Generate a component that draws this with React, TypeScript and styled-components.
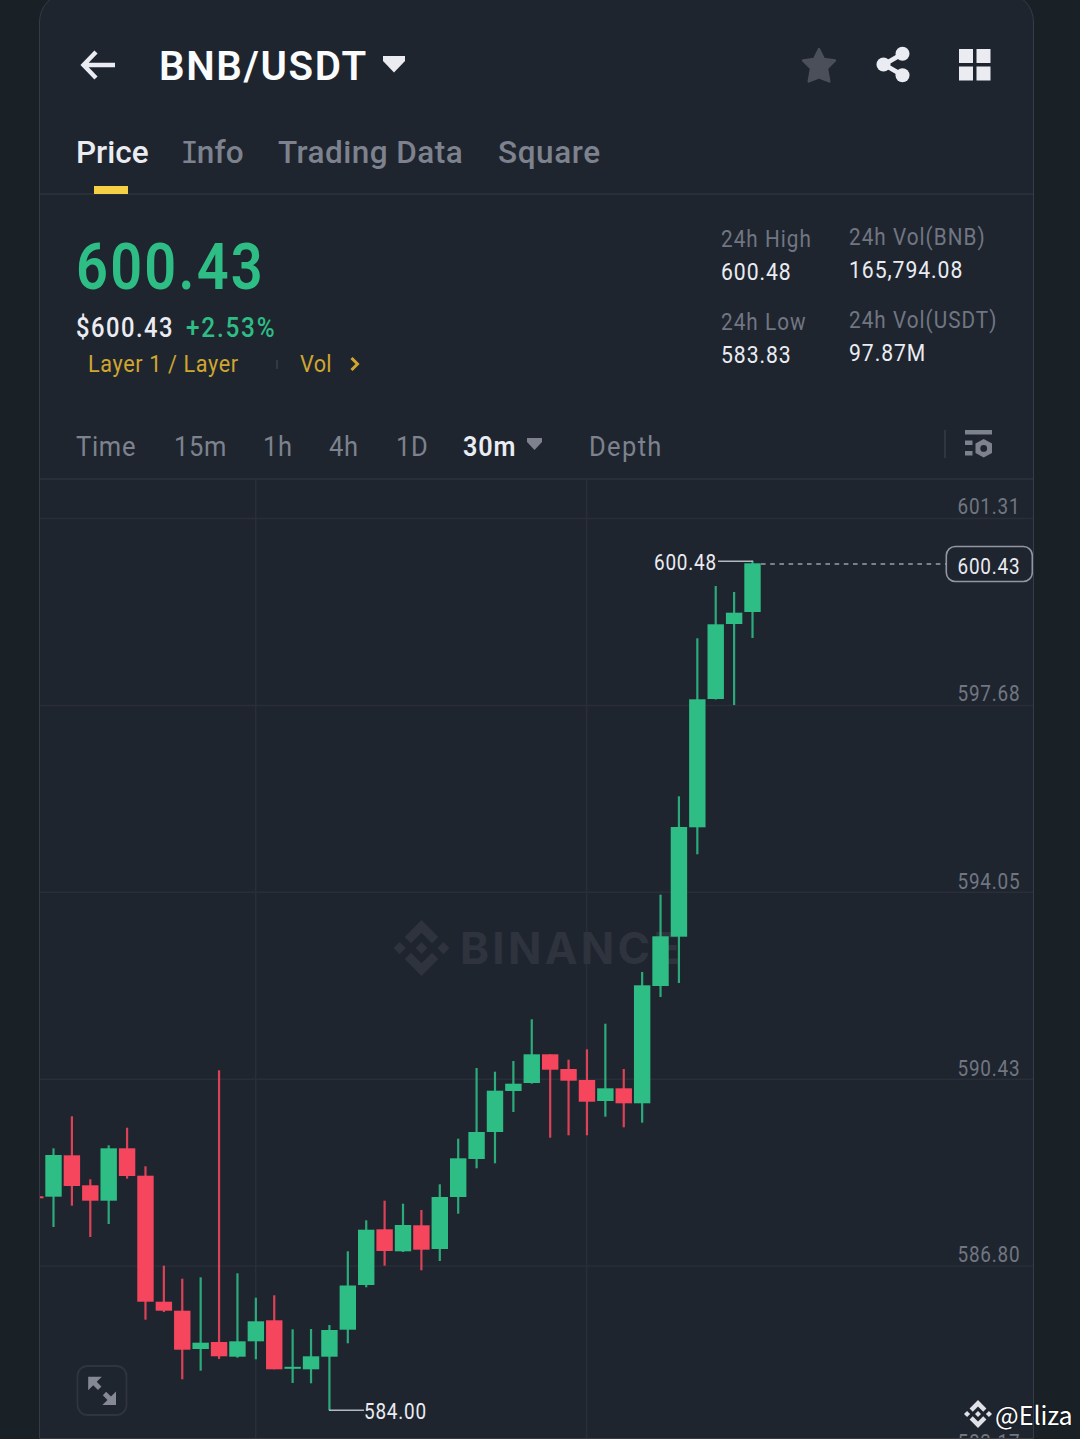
import React from "react";
import styled, { createGlobalStyle } from "styled-components";

const colors = {
  page: "#192026",
  panel: "#1f252f",
  line: "#292e39",
  edge: "#363b46",
  text: "#eaecf2",
  muted: "#7d828e",
  green: "#2ebd85",
  red: "#f6465d",
  gold: "#d0a62f",
};

const sans = `Roboto, "Noto Sans", sans-serif`;

const GlobalStyle = createGlobalStyle`
  * { box-sizing: border-box; }
  body { margin: 0; background: ${colors.page}; font-family: ${sans}; }
`;

const Page = styled.div`
  position: relative;
  width: 1080px;
  height: 1439px;
  overflow: hidden;
  background: ${colors.page};
`;

const Panel = styled.main`
  width: 995px;
  height: 1447px;
  margin: -8px 0 0 39px;
  padding-top: 8px;
  background: ${colors.panel};
  border: 1px solid ${colors.edge};
  border-radius: 30px 30px 0 0;
  display: flex;
  flex-direction: column;
  overflow: hidden;
`;

/* Narrow numerals: horizontally condensed glyphs with open tracking. */
const Narrow = styled.span<{ $scale: number; $track: number; $width?: number }>`
  display: inline-block;
  width: ${(p) => (p.$width ? `${p.$width}px` : "auto")};
  transform: scaleX(${(p) => p.$scale});
  transform-origin: left center;
  letter-spacing: ${(p) => p.$track}px;
  white-space: nowrap;
`;

const Header = styled.header`
  height: 128px;
  flex: none;
  padding: 0 40.5px 0 40px;
  display: flex;
  align-items: center;
`;

const BackIcon = styled.svg`
  width: 36px;
  height: 30px;
  flex: none;
`;

const Pair = styled.h1`
  margin: 0 0 0 43px;
  padding-top: 2px;
  color: #fafbfd;
  font-size: 41.5px;
  font-weight: 600;
  line-height: 50px;
`;

const Caret = styled.svg<{ $w: number; $h: number; $gap: number; $lift: number }>`
  width: ${(p) => p.$w}px;
  height: ${(p) => p.$h}px;
  flex: none;
  margin: 0 0 ${(p) => p.$lift}px ${(p) => p.$gap}px;
`;

const HeaderActions = styled.div`
  margin-left: auto;
  display: flex;
  align-items: center;
`;

const ActionIcon = styled.svg<{ $gap?: number }>`
  width: 36px;
  height: 38px;
  flex: none;
  margin-left: ${(p) => p.$gap ?? 0}px;
`;

const Tabs = styled.nav`
  height: 66px;
  flex: none;
  display: flex;
  padding-left: 36px;
  border-bottom: 2px solid ${colors.line};
`;

const Tab = styled.div<{ $active?: boolean; $slab?: boolean; $width: number; $spacing: number }>`
  width: ${(p) => p.$width}px;
  margin-right: 34px;
  height: 65px;
  color: ${(p) => (p.$active ? colors.text : colors.muted)};
  font-size: 31.5px;
  font-weight: 500;
  line-height: 47px;
  letter-spacing: ${(p) => p.$spacing}px;
  white-space: nowrap;

  ${(p) =>
    p.$slab &&
    `&::first-letter {
      font-family: "DejaVu Sans Mono", monospace;
      font-size: 30px;
      line-height: 20px;
      margin: 0 -2px 0 -2.5px;
    }`}

  &::after {
    content: "";
    display: ${(p) => (p.$active ? "block" : "none")};
    width: 34px;
    height: 8px;
    margin: 10px 0 0 18px;
    background: #f6cf45;
  }
`;

const Summary = styled.section`
  height: 215px;
  flex: none;
  padding: 29px 0 0 36px;
  display: flex;
`;

const PriceBlock = styled.div`
  width: 645px;
  display: flex;
  flex-direction: column;
`;

const LastPrice = styled.div`
  color: ${colors.green};
  font-size: 65px;
  font-weight: 600;
  line-height: 86px;
  height: 84px;
`;

const FiatRow = styled.div`
  display: flex;
  height: 36px;
  margin-top: 2px;
  font-size: 27px;
  font-weight: 500;
  line-height: 36px;
  color: ${colors.text};
`;

const Change = styled.span`
  color: ${colors.green};
`;

const TagRow = styled.div`
  display: flex;
  align-items: center;
  height: 36px;
  padding-left: 12px;
  color: ${colors.gold};
  font-size: 24px;
  line-height: 36px;
`;

const TagDivider = styled.i`
  width: 2px;
  height: 9px;
  margin-right: 22px;
  background: #343944;
`;

const Chevron = styled.svg`
  width: 10px;
  height: 16px;
`;

const Stats = styled.div<{ $width: number; $lift: number }>`
  width: ${(p) => p.$width}px;
  margin-top: ${(p) => -p.$lift}px;
  display: flex;
  flex-direction: column;
  gap: 19px;
`;

const StatBox = styled.div`
  display: flex;
  flex-direction: column;
  align-items: flex-start;
  font-size: 23px;
  line-height: 32px;
`;

const StatLabel = styled.span`
  color: #717682;
`;

const StatValue = styled.span`
  color: ${colors.text};
  font-size: 23.5px;
`;

const Intervals = styled.div`
  height: 70px;
  flex: none;
  display: flex;
  align-items: center;
  padding: 5px 40px 0 36px;
  border-bottom: 2px solid ${colors.line};
`;

const IntervalBox = styled.span<{ $width: number; $active?: boolean }>`
  width: ${(p) => p.$width}px;
  color: ${(p) => (p.$active ? colors.text : colors.muted)};
  font-size: 28px;
  font-weight: ${(p) => (p.$active ? 600 : 400)};
  line-height: 36px;
  display: flex;
  align-items: center;
`;

const SettingsGroup = styled.div`
  margin: 0 0 6px auto;
  display: flex;
  align-items: center;
  gap: 19px;
`;

const SettingsDivider = styled.i`
  width: 2px;
  height: 28px;
  background: #30353f;
`;

const SettingsIcon = styled.svg`
  width: 28px;
  height: 29px;
`;

const Chart = styled.svg`
  width: 993px;
  height: 959px;
  flex: none;
  display: block;
`;

const Signature = styled.div`
  position: absolute;
  left: 964px;
  top: 1396px;
  height: 36px;
  display: flex;
  align-items: center;
  gap: 3px;
  color: #fff;
  font: 400 25px/36px "Noto Sans CJK SC", "Noto Sans", sans-serif;
  text-shadow: 0 0 2px rgba(0, 0, 0, 0.6);
`;

const SignatureMark = styled.svg`
  width: 28px;
  height: 28px;
  color: #dfe1e6;
`;

type Candle = [up: 0 | 1, high: number, top: number, bottom: number, low: number];

const candles: Candle[] = [
  [1, 1148.3, 1155, 1196.7, 1227],
  [0, 1116.3, 1155.3, 1186, 1205.7],
  [0, 1179.3, 1185.3, 1200.7, 1237],
  [1, 1145.3, 1148.3, 1200.7, 1224],
  [0, 1127.7, 1148.3, 1176, 1178.7],
  [0, 1166.3, 1175.7, 1301.7, 1319.7],
  [0, 1265.7, 1301.7, 1310.7, 1312],
  [0, 1278.7, 1310.7, 1349.7, 1379.3],
  [1, 1277.3, 1342.7, 1349, 1370.7],
  [0, 1070.3, 1342, 1356.3, 1359],
  [1, 1273.3, 1341.3, 1356.7, 1357.7],
  [1, 1297.7, 1321.3, 1341.3, 1359.3],
  [0, 1295.3, 1320.3, 1369.3, 1369.3],
  [1, 1329.3, 1366.8, 1368.8, 1383],
  [1, 1329, 1356.3, 1369.3, 1383.3],
  [1, 1325, 1330, 1356.7, 1410.3],
  [1, 1251.3, 1285.5, 1329.7, 1343.3],
  [1, 1220.3, 1229.7, 1285, 1287.3],
  [0, 1200.7, 1229.3, 1251, 1265.7],
  [1, 1203.7, 1225, 1251.3, 1252],
  [0, 1210, 1225.3, 1249.7, 1270.3],
  [1, 1184.3, 1197, 1249, 1261],
  [1, 1138.7, 1158.3, 1197, 1213.7],
  [1, 1068, 1132, 1159, 1168.3],
  [1, 1071.7, 1090.7, 1132, 1163.3],
  [1, 1061, 1083.7, 1091, 1112],
  [1, 1019.3, 1054.3, 1083, 1083.7],
  [0, 1054.3, 1054.3, 1069.7, 1137.7],
  [0, 1059.7, 1069, 1080.7, 1135.3],
  [0, 1049.3, 1080, 1101.7, 1135.3],
  [1, 1023.7, 1088.3, 1101, 1116.7],
  [0, 1069, 1088.3, 1103.3, 1127.3],
  [1, 972, 985.3, 1103.3, 1122.7],
  [1, 894.7, 936.3, 986, 997],
  [1, 796.3, 827, 936.7, 983],
  [1, 638.3, 699.3, 827.3, 854.3],
  [1, 586, 624.3, 699, 699.5],
  [1, 592, 612.7, 624, 705],
  [1, 560.7, 563.3, 612, 638],
];

const axis = [
  { label: "601.31", line: 518.5, y: 514 },
  { label: "597.68", line: 705.5, y: 701 },
  { label: "594.05", line: 892.2, y: 888.5 },
  { label: "590.43", line: 1079.2, y: 1075.5 },
  { label: "586.80", line: 1266, y: 1262 },
  { label: "583.17", line: 1453, y: 1449.5 },
];

function DiamondMark() {
  return (
    <g fill="currentColor">
      <path d="M16 0 25.6 9.7 22 13.3 16 7.3 10 13.3 6.4 9.7Z" />
      <path d="M16 32 25.6 22.3 22 18.7 16 24.7 10 18.7 6.4 22.3Z" />
      <path d="M0 16 3.5 12.5 7 16 3.5 19.5Z" />
      <path d="M25 16 28.5 12.5 32 16 28.5 19.5Z" />
      <path d="M12.6 16 16 12.6 19.4 16 16 19.4Z" />
    </g>
  );
}

function PriceText({ x, y, fill, children }: { x: number; y: number; fill: string; children: string }) {
  return (
    <text transform={`translate(${x} ${y}) scale(0.88 1)`} fontSize="21.5" letterSpacing="0.9" fill={fill}>
      {children}
    </text>
  );
}

function PriceChart() {
  return (
    <Chart viewBox="40 480 993 959" fontFamily={sans}>
      <g stroke={colors.line} strokeWidth="1.6">
        {axis.map((a) => (
          <line key={a.label} x1="40" x2="1033" y1={a.line} y2={a.line} />
        ))}
        <line x1="255.7" x2="255.7" y1="480" y2="1439" />
        <line x1="586.6" x2="586.6" y1="480" y2="1439" />
      </g>
      <g color="#2e333e">
        <g transform="translate(393.5 920) scale(1.75)">
          <DiamondMark />
        </g>
        <text
          x="460"
          y="964"
          fontSize="44"
          fontWeight="700"
          fontFamily="Inter, sans-serif"
          fill="currentColor"
          textLength="220"
        >
          BINANCE
        </text>
      </g>
      <rect x="40" y="1196.3" width="3.5" height="2" fill={colors.red} />
      {candles.map(([up, high, top, bottom, low], i) => {
        const x = 53.5 + i * 18.395;
        return (
          <g key={i} fill={up ? colors.green : colors.red}>
            <rect x={x - 1.1} y={high} width="2.2" height={low - high} opacity="0.88" />
            <rect x={x - 8.2} y={top} width="16.4" height={bottom - top} />
          </g>
        );
      })}
      <g stroke="#b4b8c1" strokeWidth="1.6">
        <line x1="718" x2="753" y1="561.3" y2="561.3" />
        <line x1="329" x2="364" y1="1410.3" y2="1410.3" />
        <line x1="761" x2="946" y1="564" y2="564" strokeDasharray="4.6 4.6" stroke="#9a9ea8" />
      </g>
      <PriceText x={654} y={569.5} fill={colors.text}>600.48</PriceText>
      <PriceText x={364} y={1419} fill={colors.text}>584.00</PriceText>
      {axis.map((a) => (
        <PriceText key={a.label} x={957.5} y={a.y} fill="#717682">
          {a.label}
        </PriceText>
      ))}
      <rect
        x="946.3"
        y="546.5"
        width="86"
        height="35"
        rx="9"
        fill={colors.panel}
        stroke="#9296a1"
        strokeWidth="1.6"
      />
      <PriceText x={957.5} y={574} fill={colors.text}>600.43</PriceText>
      <rect x="77.5" y="1366" width="49" height="49" rx="10" fill="none" stroke="#2f343e" strokeWidth="1.8" />
      <g fill="#858995" stroke="#858995">
        <path stroke="none" d="M88.2 1376.7H101.8L88.2 1390.3Z" />
        <path strokeWidth="4.8" d="M92 1380.5 99.7 1388.2" />
        <path stroke="none" d="M116 1405H102.4L116 1391.4Z" />
        <path strokeWidth="4.8" d="M112.2 1401.2 104.5 1393.5" />
      </g>
    </Chart>
  );
}

function Stat({ label, value }: { label: string; value: string }) {
  return (
    <StatBox>
      <StatLabel>
        <Narrow $scale={0.9} $track={1.15}>{label}</Narrow>
      </StatLabel>
      <StatValue>
        <Narrow $scale={0.9} $track={1.05}>{value}</Narrow>
      </StatValue>
    </StatBox>
  );
}

function Interval({ label, width }: { label: string; width: number }) {
  return (
    <IntervalBox $width={width}>
      <Narrow $scale={0.91} $track={label === "Depth" ? 1.5 : 0.8}>{label}</Narrow>
    </IntervalBox>
  );
}

export default function App() {
  return (
    <Page>
      <GlobalStyle />
      <Panel>
        <Header>
          <BackIcon viewBox="0 0 36 30" fill="none" stroke={colors.text} strokeWidth="4.4">
            <path d="M3.5 15H35M16 2 3.5 15 16 28" />
          </BackIcon>
          <Pair>
            <Narrow $scale={0.97} $track={1.7} $width={208}>BNB/USDT</Narrow>
          </Pair>
          <Caret $w={22} $h={18} $gap={16} $lift={2} viewBox="0 0 22 18" fill={colors.text}>
            <path d="M0 1H22V6L11 17.5 0 6Z" />
          </Caret>
          <HeaderActions>
            <ActionIcon viewBox="0 0 36 38" fill="#4a4f59">
              <path
                d="M18 3 22.9 13 34 14.5 26 22.5 28.3 35.5 18 31.3 7.7 35.5 10 22.5 2 14.5 13.1 13Z"
                stroke="#4a4f59"
                strokeWidth="2.4"
                strokeLinejoin="round"
              />
            </ActionIcon>
            <ActionIcon $gap={38} viewBox="0 0 36 38" fill={colors.text}>
              <path d="M9 18.5 28 7.5M9 18.5 28 29.5" stroke={colors.text} strokeWidth="4.8" />
              <circle cx="8.5" cy="18.5" r="7" />
              <circle cx="27.5" cy="7.8" r="7" />
              <circle cx="27.5" cy="29.3" r="7" />
            </ActionIcon>
            <ActionIcon $gap={46} viewBox="0 0 36 38" fill={colors.text}>
              <path d="M2 3h14v14H2zM19.5 3h14v14h-14zM2 20.5h14v14H2zM19.5 20.5h14v14h-14z" />
            </ActionIcon>
          </HeaderActions>
        </Header>

        <Tabs>
          <Tab $active $width={73} $spacing={0}>Price</Tab>
          <Tab $slab $width={61} $spacing={0.2}>Info</Tab>
          <Tab $width={186} $spacing={0.45}>Trading Data</Tab>
          <Tab $width={104} $spacing={0.6}>Square</Tab>
        </Tabs>

        <Summary>
          <PriceBlock>
            <LastPrice>
              <Narrow $scale={0.86} $track={2.6}>600.43</Narrow>
            </LastPrice>
            <FiatRow>
              <Narrow $scale={0.88} $track={1.7} $width={110}>$600.43</Narrow>
              <Change>
                <Narrow $scale={0.9} $track={2}>+2.53%</Narrow>
              </Change>
            </FiatRow>
            <TagRow>
              <Narrow $scale={0.9} $track={0.7} $width={188}>Layer 1 / Layer</Narrow>
              <TagDivider />
              <Narrow $scale={0.9} $track={0.4} $width={50}>Vol</Narrow>
              <Chevron viewBox="0 0 10 16" fill="none" stroke={colors.gold} strokeWidth="3">
                <path d="M1.5 2 7.5 8 1.5 14" />
              </Chevron>
            </TagRow>
          </PriceBlock>
          <Stats $width={128} $lift={0}>
            <Stat label="24h High" value="600.48" />
            <Stat label="24h Low" value="583.83" />
          </Stats>
          <Stats $width={160} $lift={2}>
            <Stat label="24h Vol(BNB)" value="165,794.08" />
            <Stat label="24h Vol(USDT)" value="97.87M" />
          </Stats>
        </Summary>

        <Intervals>
          <Interval width={98} label="Time" />
          <Interval width={89} label="15m" />
          <Interval width={66} label="1h" />
          <Interval width={67} label="4h" />
          <Interval width={67} label="1D" />
          <IntervalBox $width={126} $active>
            <Narrow $scale={0.9} $track={1} $width={53}>30m</Narrow>
            <Caret $w={15} $h={12} $gap={11} $lift={6} viewBox="0 0 15 12" fill={colors.muted}>
              <path d="M0 0H15V4L7.5 12 0 4Z" />
            </Caret>
          </IntervalBox>
          <Interval width={90} label="Depth" />
          <SettingsGroup>
            <SettingsDivider />
            <SettingsIcon viewBox="0 0 28 29" fill={colors.muted}>
              <path d="M0 1h27v4.5H0zM0 11.5h7.5v4.5H0zM0 22h7.5v4.5H0z" />
              <path
                fillRule="evenodd"
                d="M18.7 10 27 14.6V24L18.7 28.6 10.5 24V14.6ZM18.7 16a3.4 3.4 0 1 0 0 6.8 3.4 3.4 0 0 0 0-6.8Z"
              />
            </SettingsIcon>
          </SettingsGroup>
        </Intervals>

        <PriceChart />
      </Panel>

      <Signature>
        <SignatureMark viewBox="0 0 32 32">
          <DiamondMark />
        </SignatureMark>
        @Eliza
      </Signature>
    </Page>
  );
}
